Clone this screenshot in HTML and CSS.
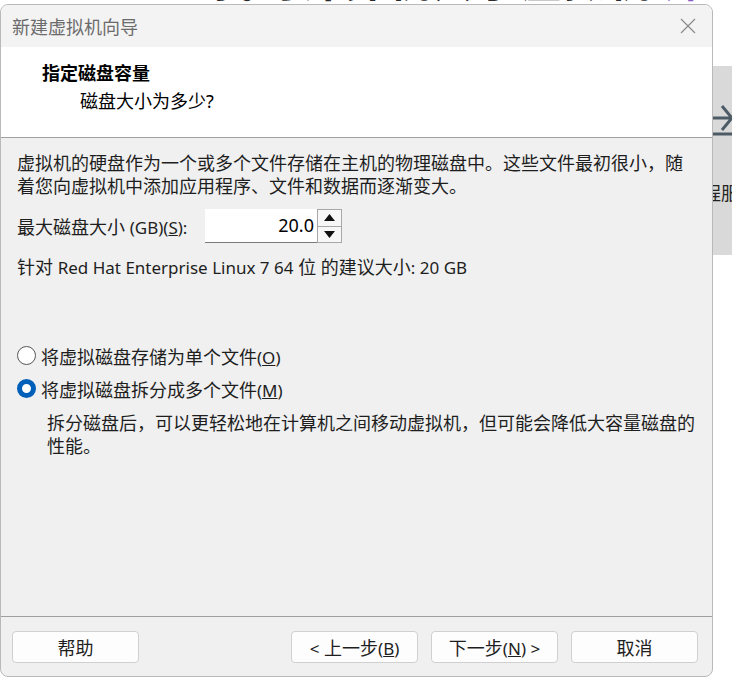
FILE: index.html
```html
<!DOCTYPE html>
<html lang="zh-CN">
<head>
  <meta charset="UTF-8">
  <title>新建虚拟机向导</title>
  <link rel="stylesheet" href="styles.css">
</head>
<body>

<div class="desktop">
  <div class="bg-heading">我的计算机共享虚拟机<span class="bg-tag">库</span></div>
  <div class="bg-panel">
    <svg class="bg-arrow" width="20" height="50" viewBox="0 0 20 50">
      <path d="M0 20 H20 M10 8 L20 20 L10 32" fill="none" stroke="#4d5b66" stroke-width="3"/>
      <path d="M0 36 H20" stroke="#4d5b66" stroke-width="3"/>
    </svg>
    <div class="bg-text">远程服务器</div>
  </div>

  <div class="dialog">
    <div class="titlebar">
      <span class="title">新建虚拟机向导</span>
      <svg class="close" width="16" height="16" viewBox="0 0 16 16">
        <path d="M1 1 L15 15 M15 1 L1 15" stroke="#8a8a8a" stroke-width="1.2" fill="none"/>
      </svg>
    </div>

    <div class="header">
      <div class="header-title">指定磁盘容量</div>
      <div class="header-sub">磁盘大小为多少?</div>
    </div>

    <div class="content">
      <p class="intro">虚拟机的硬盘作为一个或多个文件存储在主机的物理磁盘中。这些文件最初很小，随着您向虚拟机中添加应用程序、文件和数据而逐渐变大。</p>

      <div class="size-row">
        <label class="size-label">最大磁盘大小 <span class="lat">(GB)(<u>S</u>):</span></label>
        <div class="spin">
          <div class="spin-value lat">20.0</div>
          <div class="spin-btns">
            <div class="spin-btn">
              <svg width="11" height="7" viewBox="0 0 11 7"><path d="M5.5 0 L11 7 H0 Z" fill="#111"/></svg>
            </div>
            <div class="spin-btn">
              <svg width="11" height="7" viewBox="0 0 11 7"><path d="M0 0 H11 L5.5 7 Z" fill="#111"/></svg>
            </div>
          </div>
        </div>
      </div>

      <div class="recommend">针对 <span class="lat">Red Hat Enterprise Linux 7 64</span> 位 的建议大小<span class="lat">: 20 GB</span></div>

      <div class="options">
        <div class="option">
          <span class="radio"></span>
          <span>将虚拟磁盘存储为单个文件<span class="lat">(<u>O</u>)</span></span>
        </div>
        <div class="option">
          <span class="radio checked"></span>
          <span>将虚拟磁盘拆分成多个文件<span class="lat">(<u>M</u>)</span></span>
        </div>
        <p class="option-desc">拆分磁盘后，可以更轻松地在计算机之间移动虚拟机，但可能会降低大容量磁盘的性能。</p>
      </div>
    </div>

    <div class="footer">
      <button class="btn">帮助</button>
      <div class="footer-right">
        <button class="btn"><span class="lat">&lt;</span> 上一步<span class="lat">(<u>B</u>)</span></button>
        <button class="btn">下一步<span class="lat">(<u>N</u>) &gt;</span></button>
        <button class="btn">取消</button>
      </div>
    </div>
  </div>
</div>

</body>
</html>
```

FILE: styles.css
```css
* {
  box-sizing: border-box;
}

body {
  margin: 0;
  background: #ffffff;
  font-family: "Noto Sans", "Noto Sans CJK SC", sans-serif;
  color: #1e1e1e;
}

.desktop {
  position: relative;
  width: 732px;
  height: 679px;
  overflow: hidden;
}

.bg-heading {
  position: absolute;
  top: -52px;
  left: 212px;
  font-size: 42px;
  letter-spacing: 2px;
  font-weight: bold;
  color: #2a2a2a;
  white-space: nowrap;
}

.bg-tag {
  margin-left: 12px;
  color: #8a5cc8;
}

.bg-panel {
  position: absolute;
  left: 712px;
  top: 66px;
  width: 60px;
  height: 189px;
  background: #d9d9d9;
  overflow: hidden;
}

.bg-arrow {
  display: block;
  margin-top: 32px;
}

.bg-text {
  margin-top: 31px;
  margin-left: -27px;
  font-size: 18px;
  white-space: nowrap;
  color: #222;
}

.dialog {
  position: absolute;
  left: 0;
  top: 4px;
  width: 713px;
  height: 673px;
  display: flex;
  flex-direction: column;
  background: #f0f0f0;
  border: 1px solid #b9b9b9;
  border-radius: 8px;
  overflow: hidden;
}

.titlebar {
  height: 42px;
  flex-shrink: 0;
  display: flex;
  align-items: center;
  justify-content: space-between;
  padding: 0 16px 0 11px;
  background: #f3f3f3;
}

.title {
  font-size: 18px;
  color: #6b6b6b;
}

.close {
  display: block;
}

.header {
  height: 91px;
  flex-shrink: 0;
  background: #ffffff;
  border-bottom: 1px solid #a0a0a0;
  padding: 13px 0 0 41px;
  font-size: 18px;
  color: #000;
}

.header-title {
  font-weight: bold;
  line-height: 26px;
}

.header-sub {
  padding-left: 38px;
  line-height: 30px;
}

.content {
  flex: 1;
  padding: 14px 10px 0 16px;
  font-size: 18px;
}

.lat {
  font-size: 17px;
}

.intro {
  margin: 0;
  max-width: 676px;
  line-height: 23px;
}

.size-row {
  display: flex;
  align-items: center;
  margin-top: 11px;
}

.size-label {
  width: 188px;
}

.spin {
  display: flex;
  height: 34px;
}

.spin-value {
  width: 112px;
  background: #ffffff;
  border-bottom: 1px solid #7a7a7a;
  text-align: right;
  padding-right: 3px;
  line-height: 32px;
  font-size: 18px;
  color: #000;
}

.spin-btns {
  width: 25px;
  display: flex;
  flex-direction: column;
  border: 1px solid #a8a8a8;
  background: #f7f7f7;
}

.spin-btn {
  flex: 1;
  display: flex;
  align-items: center;
  justify-content: center;
}

.spin-btn + .spin-btn {
  border-top: 1px solid #a8a8a8;
}

.recommend {
  margin-top: 12px;
  line-height: 24px;
}

.options {
  margin-top: 59px;
}

.option {
  display: flex;
  align-items: center;
  gap: 5px;
  height: 33px;
}

.radio {
  width: 19px;
  height: 19px;
  border-radius: 50%;
  border: 1px solid #555;
  background: #fff;
  flex-shrink: 0;
}

.radio.checked {
  border: 5.5px solid #005fb8;
  background: #fff;
}

.option-desc {
  margin: 7px 0 0 30px;
  line-height: 23px;
}

.footer {
  height: 60px;
  flex-shrink: 0;
  border-top: 1px solid #a0a0a0;
  display: flex;
  justify-content: space-between;
  align-items: flex-start;
  padding: 14px 14px 0 11px;
}

.footer-right {
  display: flex;
  gap: 13px;
}

.btn {
  width: 127px;
  height: 32px;
  background: #fdfdfd;
  border: 1px solid #d0d0d0;
  border-radius: 4px;
  font-family: "Noto Sans", "Noto Sans CJK SC", sans-serif;
  font-size: 18px;
  color: #1e1e1e;
  padding: 0;
}
```
